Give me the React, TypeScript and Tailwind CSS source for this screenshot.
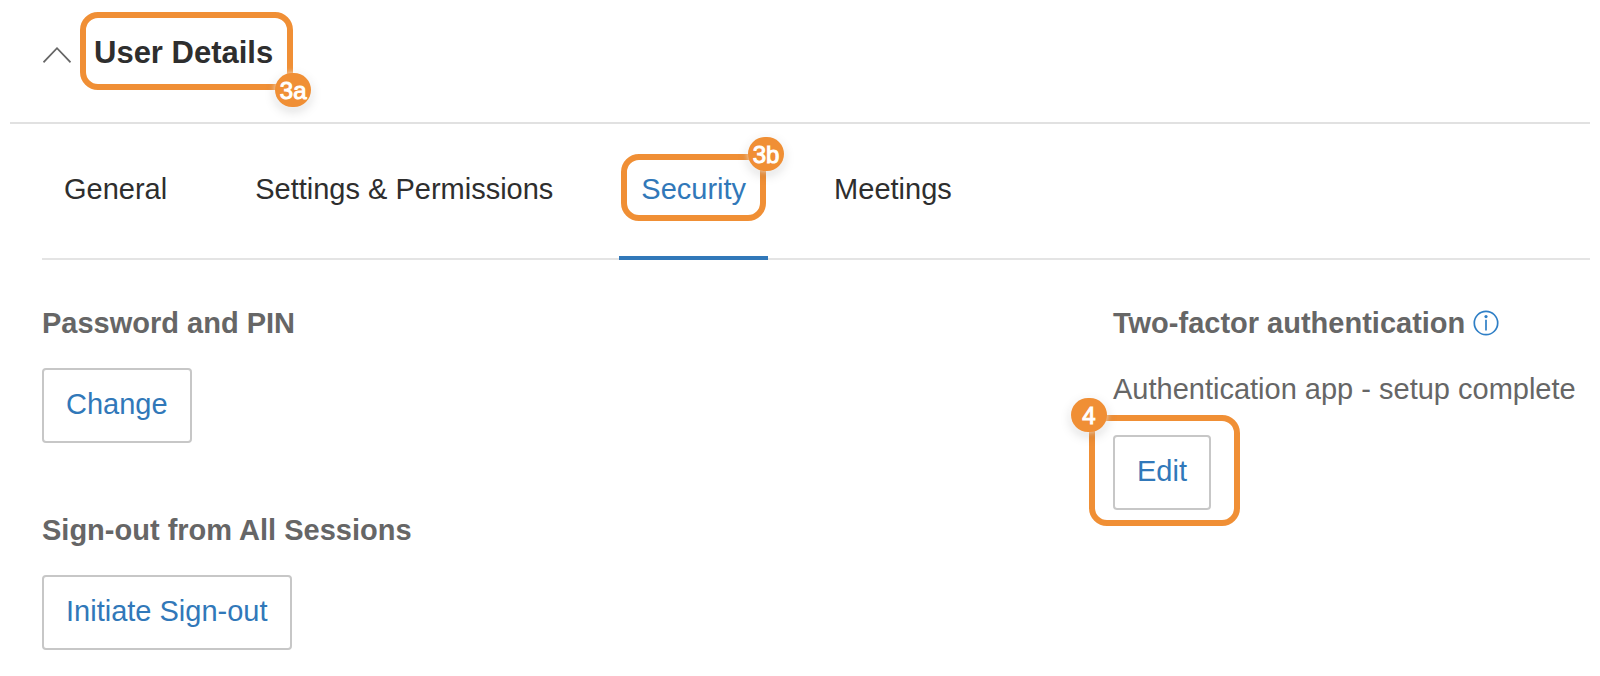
import { clsx } from 'clsx';
import { FC, JSX, ReactNode, useState } from 'react';

interface CalloutProps {
  label: string;
  frameClassName: string;
  badgeClassName: string;
}

interface OutlineButtonProps {
  children: ReactNode;
}

const TABS = ['General', 'Settings & Permissions', 'Security', 'Meetings'];

const sectionTitleClasses = 'text-[29px] leading-9 font-bold text-[#666]';

/* Orange frame with a numbered step badge, laid over its relative parent */
const Callout: FC<CalloutProps> = ({ label, frameClassName, badgeClassName }): JSX.Element => (
  <span
    className={clsx(
      'pointer-events-none absolute rounded-[18px] border-6 border-[#f08f35]',
      frameClassName,
    )}
  >
    <span
      className={clsx(
        'absolute flex h-[34px] w-9 items-center justify-center rounded-full pt-0.5',
        'bg-[#f08f35] text-2xl leading-8 font-normal text-white [-webkit-text-stroke:1px_white]',
        'shadow-[0_0_6px_#ffffffcc,0_4px_12px_#00000026]',
        badgeClassName,
      )}
    >
      {label}
    </span>
  </span>
);

const OutlineButton: FC<OutlineButtonProps> = ({ children }): JSX.Element => (
  <button
    type="button"
    className="cursor-pointer rounded border-2 border-[#c7c7c7] bg-white px-[22px] pt-4 pb-[19px] text-[29px] leading-9 text-[#3178b9]"
  >
    {children}
  </button>
);

const ChevronUp: FC = (): JSX.Element => (
  <svg
    className="h-4 w-7"
    viewBox="0 0 28 16"
    fill="none"
    stroke="#666"
    strokeWidth="1.7"
    aria-hidden="true"
  >
    <path d="M.5 15.3 14 1.2 27.5 15.3" />
  </svg>
);

const InfoIcon: FC = (): JSX.Element => (
  <svg
    className="size-[26px]"
    viewBox="0 0 26 26"
    fill="none"
    stroke="#2f7fc6"
    aria-hidden="true"
  >
    <circle
      cx="13"
      cy="13"
      r="11.7"
      strokeWidth="1.7"
    />
    <path
      d="M13 9.8v10.6"
      strokeWidth="1.7"
    />
    <circle
      cx="13"
      cy="6.6"
      r="1.6"
      fill="#2f7fc6"
      stroke="none"
    />
  </svg>
);

const App: FC = (): JSX.Element => {
  const [activeTab, setActiveTab] = useState('Security');
  const [isOpen, setIsOpen] = useState(true);

  return (
    <main className="min-h-screen bg-white px-2.5 pb-6 font-['Liberation_Sans',Arial,sans-serif]">
      <header className="flex h-31 items-center gap-[23px] border-b-2 border-[#e1e1e1] pb-4 pl-[33px]">
        <button
          type="button"
          className="cursor-pointer pt-1"
          aria-label="Toggle user details"
          aria-expanded={isOpen}
          onClick={() => setIsOpen(!isOpen)}
        >
          <ChevronUp />
        </button>
        <h1 className="relative text-[31px] leading-9 font-bold text-[#2e2e2e]">
          User Details
          <Callout
            label="3a"
            frameClassName="-top-[23px] -right-5 -bottom-[19px] -left-3.5"
            badgeClassName="-right-6 -bottom-[23px]"
          />
        </h1>
      </header>

      {isOpen && (
        <div className="pl-8">
          <div
            role="tablist"
            className="flex gap-11 border-b-2 border-[#e4e4e4]"
          >
            {TABS.map(tab => (
              <button
                key={tab}
                type="button"
                role="tab"
                aria-selected={tab === activeTab}
                className={clsx(
                  '-mb-0.5 cursor-pointer border-b-4 px-[22px] pt-[47px] pb-[49px] text-[29px] leading-9',
                  tab === activeTab ? 'border-[#3178b9] text-[#3178b9]' : 'border-transparent text-[#2e2e2e]',
                )}
                onClick={() => setActiveTab(tab)}
              >
                <span className="relative block">
                  {tab}
                  {tab === 'Security' && (
                    <Callout
                      label="3b"
                      frameClassName="-inset-x-5 -top-[17px] -bottom-3.5"
                      badgeClassName="-top-[23px] -right-6"
                    />
                  )}
                </span>
              </button>
            ))}
          </div>

          <div className="flex justify-between gap-8 pt-[45px]">
            <div className="flex flex-col gap-[69px]">
              <section className="flex flex-col items-start gap-[27px]">
                <h2 className={sectionTitleClasses}>Password and PIN</h2>
                <OutlineButton>Change</OutlineButton>
              </section>
              <section className="flex flex-col items-start gap-[27px]">
                <h2 className={sectionTitleClasses}>Sign-out from All Sessions</h2>
                <OutlineButton>Initiate Sign-out</OutlineButton>
              </section>
            </div>

            <section className="flex w-[477px] flex-col items-start">
              <div className="flex items-center gap-2">
                <h2 className={sectionTitleClasses}>Two-factor authentication</h2>
                <button
                  type="button"
                  className="cursor-pointer"
                  aria-label="About two-factor authentication"
                >
                  <InfoIcon />
                </button>
              </div>
              <p className="mt-[30px] text-[29px] leading-9 text-[#666]">Authentication app - setup complete</p>
              <div className="relative mt-7">
                <OutlineButton>Edit</OutlineButton>
                <Callout
                  label="4"
                  frameClassName="-top-5 -right-[29px] -bottom-4 -left-6"
                  badgeClassName="-top-[23px] -left-6"
                />
              </div>
            </section>
          </div>
        </div>
      )}
    </main>
  );
};

export default App;
